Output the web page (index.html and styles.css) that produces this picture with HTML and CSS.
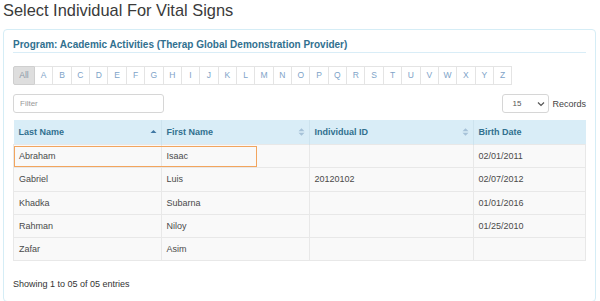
FILE: index.html
```html
<!DOCTYPE html>
<html lang="en">
<head>
  <meta charset="UTF-8">
  <meta name="viewport" content="width=device-width, initial-scale=1.0">
  <title>Select Individual For Vital Signs</title>
  <link rel="stylesheet" href="styles.css">
</head>
<body>
<h1 class="page-title">Select Individual For Vital Signs</h1>
<div class="panel">
  <h2 class="program">Program: Academic Activities (Therap Global Demonstration Provider)</h2>
  <div class="letters">
    <span class="letter active all">All</span>
    <span class="letter">A</span><span class="letter">B</span><span class="letter">C</span><span class="letter">D</span>
    <span class="letter">E</span><span class="letter">F</span><span class="letter">G</span><span class="letter">H</span>
    <span class="letter">I</span><span class="letter">J</span><span class="letter">K</span><span class="letter">L</span>
    <span class="letter">M</span><span class="letter">N</span><span class="letter">O</span><span class="letter">P</span>
    <span class="letter">Q</span><span class="letter">R</span><span class="letter">S</span><span class="letter">T</span>
    <span class="letter">U</span><span class="letter">V</span><span class="letter">W</span><span class="letter">X</span>
    <span class="letter">Y</span><span class="letter">Z</span>
  </div>
  <div class="tools">
    <input class="filter" type="text" placeholder="Filter">
    <div class="records">
      <div class="select"><span>15</span>
        <svg width="8" height="6" viewBox="0 0 8 6"><path d="M1 1.5 L4 4.5 L7 1.5" fill="none" stroke="#555" stroke-width="1.2"/></svg>
      </div>
      <span>Records</span>
    </div>
  </div>
  <table class="grid">
    <thead>
      <tr>
        <th class="c1">Last Name
          <svg class="sort" width="7" height="10" viewBox="0 0 7 10"><path d="M0.5 6 L3.5 3 L6.5 6 Z" fill="#3f77a3"/></svg>
        </th>
        <th class="c2">First Name
          <svg class="sort" width="7" height="10" viewBox="0 0 7 10"><path d="M0.5 4.3 L3.5 1.3 L6.5 4.3 Z M0.5 5.7 L3.5 8.7 L6.5 5.7 Z" fill="#a6c2d8"/></svg>
        </th>
        <th class="c3">Individual ID
          <svg class="sort" width="7" height="10" viewBox="0 0 7 10"><path d="M0.5 4.3 L3.5 1.3 L6.5 4.3 Z M0.5 5.7 L3.5 8.7 L6.5 5.7 Z" fill="#a6c2d8"/></svg>
        </th>
        <th class="c4">Birth Date</th>
      </tr>
    </thead>
    <tbody>
      <tr class="focused"><td>Abraham<span class="ring"></span></td><td>Isaac</td><td></td><td>02/01/2011</td></tr>
      <tr><td>Gabriel</td><td>Luis</td><td>20120102</td><td>02/07/2012</td></tr>
      <tr><td>Khadka</td><td>Subarna</td><td></td><td>01/01/2016</td></tr>
      <tr><td>Rahman</td><td>Niloy</td><td></td><td>01/25/2010</td></tr>
      <tr><td>Zafar</td><td>Asim</td><td></td><td></td></tr>
    </tbody>
  </table>
  <p class="info">Showing 1 to 05 of 05 entries</p>
</div>
</body>
</html>
```

FILE: styles.css
```css
body {
  margin: 0;
  padding: 0 4px 0 3px;
  background-color: white;
  color: #333;
  font-family: "Liberation Sans", Arial, Helvetica, sans-serif;
}

.page-title {
  margin: 0 0 9px;
  font-size: 16.4px;
  font-weight: normal;
  line-height: 20px;
  color: #3a3a3a;
}

.panel {
  border: 1px solid #d5edf6;
  border-radius: 4px;
  padding: 8px 9px 10px;
}

.program {
  margin: 0 0 13px;
  font-size: 10px;
  line-height: 14px;
  color: #31708f;
  border-bottom: 1px solid #d9edf7;
}

.letters {
  display: flex;
  width: 500px;
}

.letter {
  width: 18.37px;
  height: 19px;
  box-sizing: border-box;
  border: 1px solid #e4e4e4;
  border-left: none;
  font-size: 8.5px;
  line-height: 17px;
  text-align: center;
  color: #7ea3c8;
}

.letter.all {
  width: 22px;
  border-left: 1px solid #d0d0d0;
  border-radius: 2px 0 0 2px;
}

.letter.active {
  background-color: #dedede;
  border-color: #cfcfcf;
  color: #8a99a8;
}

.tools {
  display: flex;
  justify-content: space-between;
  align-items: center;
  margin: 9px 0 7px;
}

.filter {
  width: 151px;
  height: 19px;
  box-sizing: border-box;
  margin: 0;
  padding: 0 6px;
  border: 1px solid #d6d6d6;
  border-radius: 3px;
  font-family: inherit;
  font-size: 8px;
}

.filter::placeholder {
  color: #999;
}

.records {
  display: flex;
  align-items: center;
  gap: 3px;
  font-size: 9px;
  color: #444;
}

.select {
  width: 47px;
  height: 19px;
  box-sizing: border-box;
  display: flex;
  justify-content: space-between;
  align-items: center;
  padding: 0 3px 0 9px;
  border: 1px solid #d6d6d6;
  border-radius: 3px;
  font-size: 8px;
  color: #555;
}

.grid {
  width: 100%;
  border-collapse: collapse;
  font-size: 9px;
}

.grid th {
  position: relative;
  height: 24px;
  padding: 0 5px;
  background-color: #d9edf7;
  color: #31708f;
  text-align: left;
  border-left: 1px solid #cde3ee;
}

.grid th:first-child {
  border-left: none;
}

.grid .c1 { width: 137px; }
.grid .c2 { width: 137px; }
.grid .c3 { width: 153px; }

.sort {
  position: absolute;
  right: 4px;
  top: 7px;
}

.grid td {
  height: 22.3px;
  padding: 0 5px;
  background-color: #f9f9f9;
  color: #4a4a4a;
  border: 1px solid #e8e8e8;
}

.grid td:first-child {
  position: relative;
}

.ring {
  position: absolute;
  left: 0;
  top: 1px;
  width: 243px;
  height: 21px;
  box-sizing: border-box;
  border: 1.5px solid #f2a55e;
}

.info {
  margin: 16px 0 0;
  font-size: 9px;
  line-height: 14px;
  color: #333;
}
```
